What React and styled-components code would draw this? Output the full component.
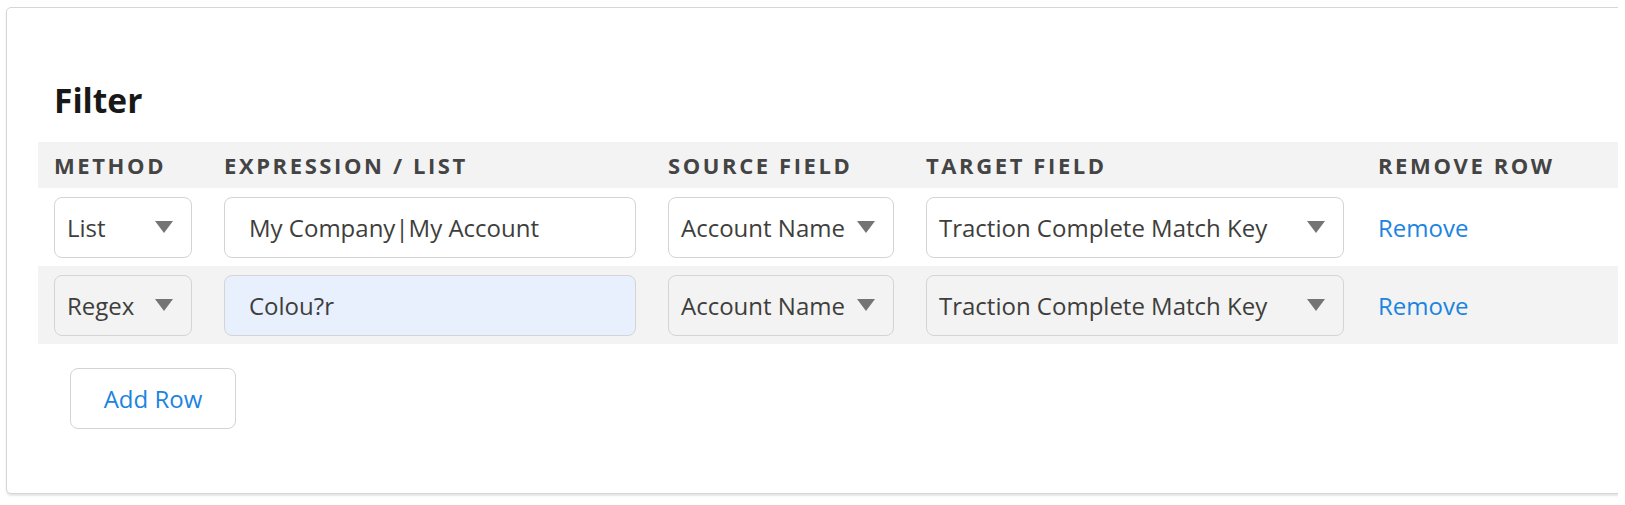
import React from "react";
import styled, { createGlobalStyle } from "styled-components";

const GlobalStyle = createGlobalStyle`
  html, body {
    margin: 0;
    padding: 0;
    background: #ffffff;
  }
  body {
    font-family: "Open Sans", "Noto Sans", "Liberation Sans", sans-serif;
    color: #3e3e3c;
  }
  * { box-sizing: border-box; }
`;

const Viewport = styled.div`
  width: 1618px;
  height: 505px;
  overflow: hidden;
  padding: 7px 0 0 6px;
`;

const Card = styled.section`
  width: 1720px;
  height: 487px;
  background: #ffffff;
  border: 1px solid #d6d6d6;
  border-radius: 5px;
  box-shadow: 0 2px 2px 0 rgba(0, 0, 0, 0.1);
  padding: 0 0 0 31px;
  display: flex;
  flex-direction: column;
`;

const Title = styled.h2`
  margin: 72px 0 22px 16px;
  font-size: 33.5px;
  line-height: 40px;
  font-weight: 700;
  color: #181818;
`;

const columns = "138px 412px 226px 418px 1fr";

const HeaderRow = styled.div`
  display: grid;
  grid-template-columns: ${columns};
  column-gap: 32px;
  align-items: center;
  height: 46px;
  padding-left: 16px;
  background: #f3f3f3;
`;

const HeaderCell = styled.div`
  font-size: 22px;
  font-weight: 700;
  letter-spacing: 2.6px;
  text-transform: uppercase;
  color: #444444;
  white-space: nowrap;
  line-height: 1;
  padding-left: ${(p) => (p.$last ? "2px" : "0")};
`;

const Row = styled.div`
  display: grid;
  grid-template-columns: ${columns};
  column-gap: 32px;
  align-items: center;
  height: 78px;
  padding: 0 0 0 16px;
  background: ${(p) => (p.$shaded ? "#f3f3f3" : "#ffffff")};
`;

const SelectBox = styled.div`
  height: 61px;
  display: flex;
  align-items: center;
  justify-content: space-between;
  gap: 8px;
  padding: 0 18px 0 12px;
  border: 1px solid #d4d4d4;
  border-radius: 8px;
  background: transparent;
  font-size: 24px;
  color: #3e3e3c;
  white-space: nowrap;
  overflow: hidden;
`;

const TextInput = styled.div`
  height: 61px;
  display: flex;
  align-items: center;
  padding: 0 0 0 24px;
  border: 1px solid #d4d4d4;
  border-radius: 8px;
  background: ${(p) => (p.$filled ? "#e8f0fe" : "#ffffff")};
  font-size: 24px;
  color: #3e3e3c;
  white-space: nowrap;
`;

const RemoveCell = styled.div`
  padding-left: 2px;
`;

const LinkButton = styled.span`
  font-size: 24px;
  color: #1b84e0;
  cursor: pointer;
`;

const Footer = styled.div`
  padding: 24px 0 0 32px;
`;

const AddButton = styled.button`
  width: 166px;
  height: 61px;
  border: 1px solid #d4d4d4;
  border-radius: 8px;
  background: #ffffff;
  font-family: inherit;
  font-size: 24px;
  color: #1b84e0;
  cursor: pointer;
  padding: 0;
`;

const Arrow = () => (
  <svg width="18" height="12" viewBox="0 0 18 12" style={{ flex: "none" }}>
    <path d="M0 0 H18 L9 12 Z" fill="#747474" />
  </svg>
);

const Select = ({ value }) => (
  <SelectBox>
    <span>{value}</span>
    <Arrow />
  </SelectBox>
);

const rows = [
  { method: "List", expr: "My Company|My Account", filled: false },
  { method: "Regex", expr: "Colou?r", filled: true },
];

export default function App() {
  return (
    <>
      <GlobalStyle />
      <Viewport>
        <Card>
          <Title>Filter</Title>
          <HeaderRow>
            <HeaderCell>Method</HeaderCell>
            <HeaderCell>Expression / List</HeaderCell>
            <HeaderCell>Source Field</HeaderCell>
            <HeaderCell>Target Field</HeaderCell>
            <HeaderCell $last>Remove Row</HeaderCell>
          </HeaderRow>
          {rows.map((r, i) => (
            <Row key={i} $shaded={i % 2 === 1}>
              <Select value={r.method} />
              <TextInput $filled={r.filled}>{r.expr}</TextInput>
              <Select value="Account Name" />
              <Select value="Traction Complete Match Key" />
              <RemoveCell>
                <LinkButton>Remove</LinkButton>
              </RemoveCell>
            </Row>
          ))}
          <Footer>
            <AddButton>Add Row</AddButton>
          </Footer>
        </Card>
      </Viewport>
    </>
  );
}
